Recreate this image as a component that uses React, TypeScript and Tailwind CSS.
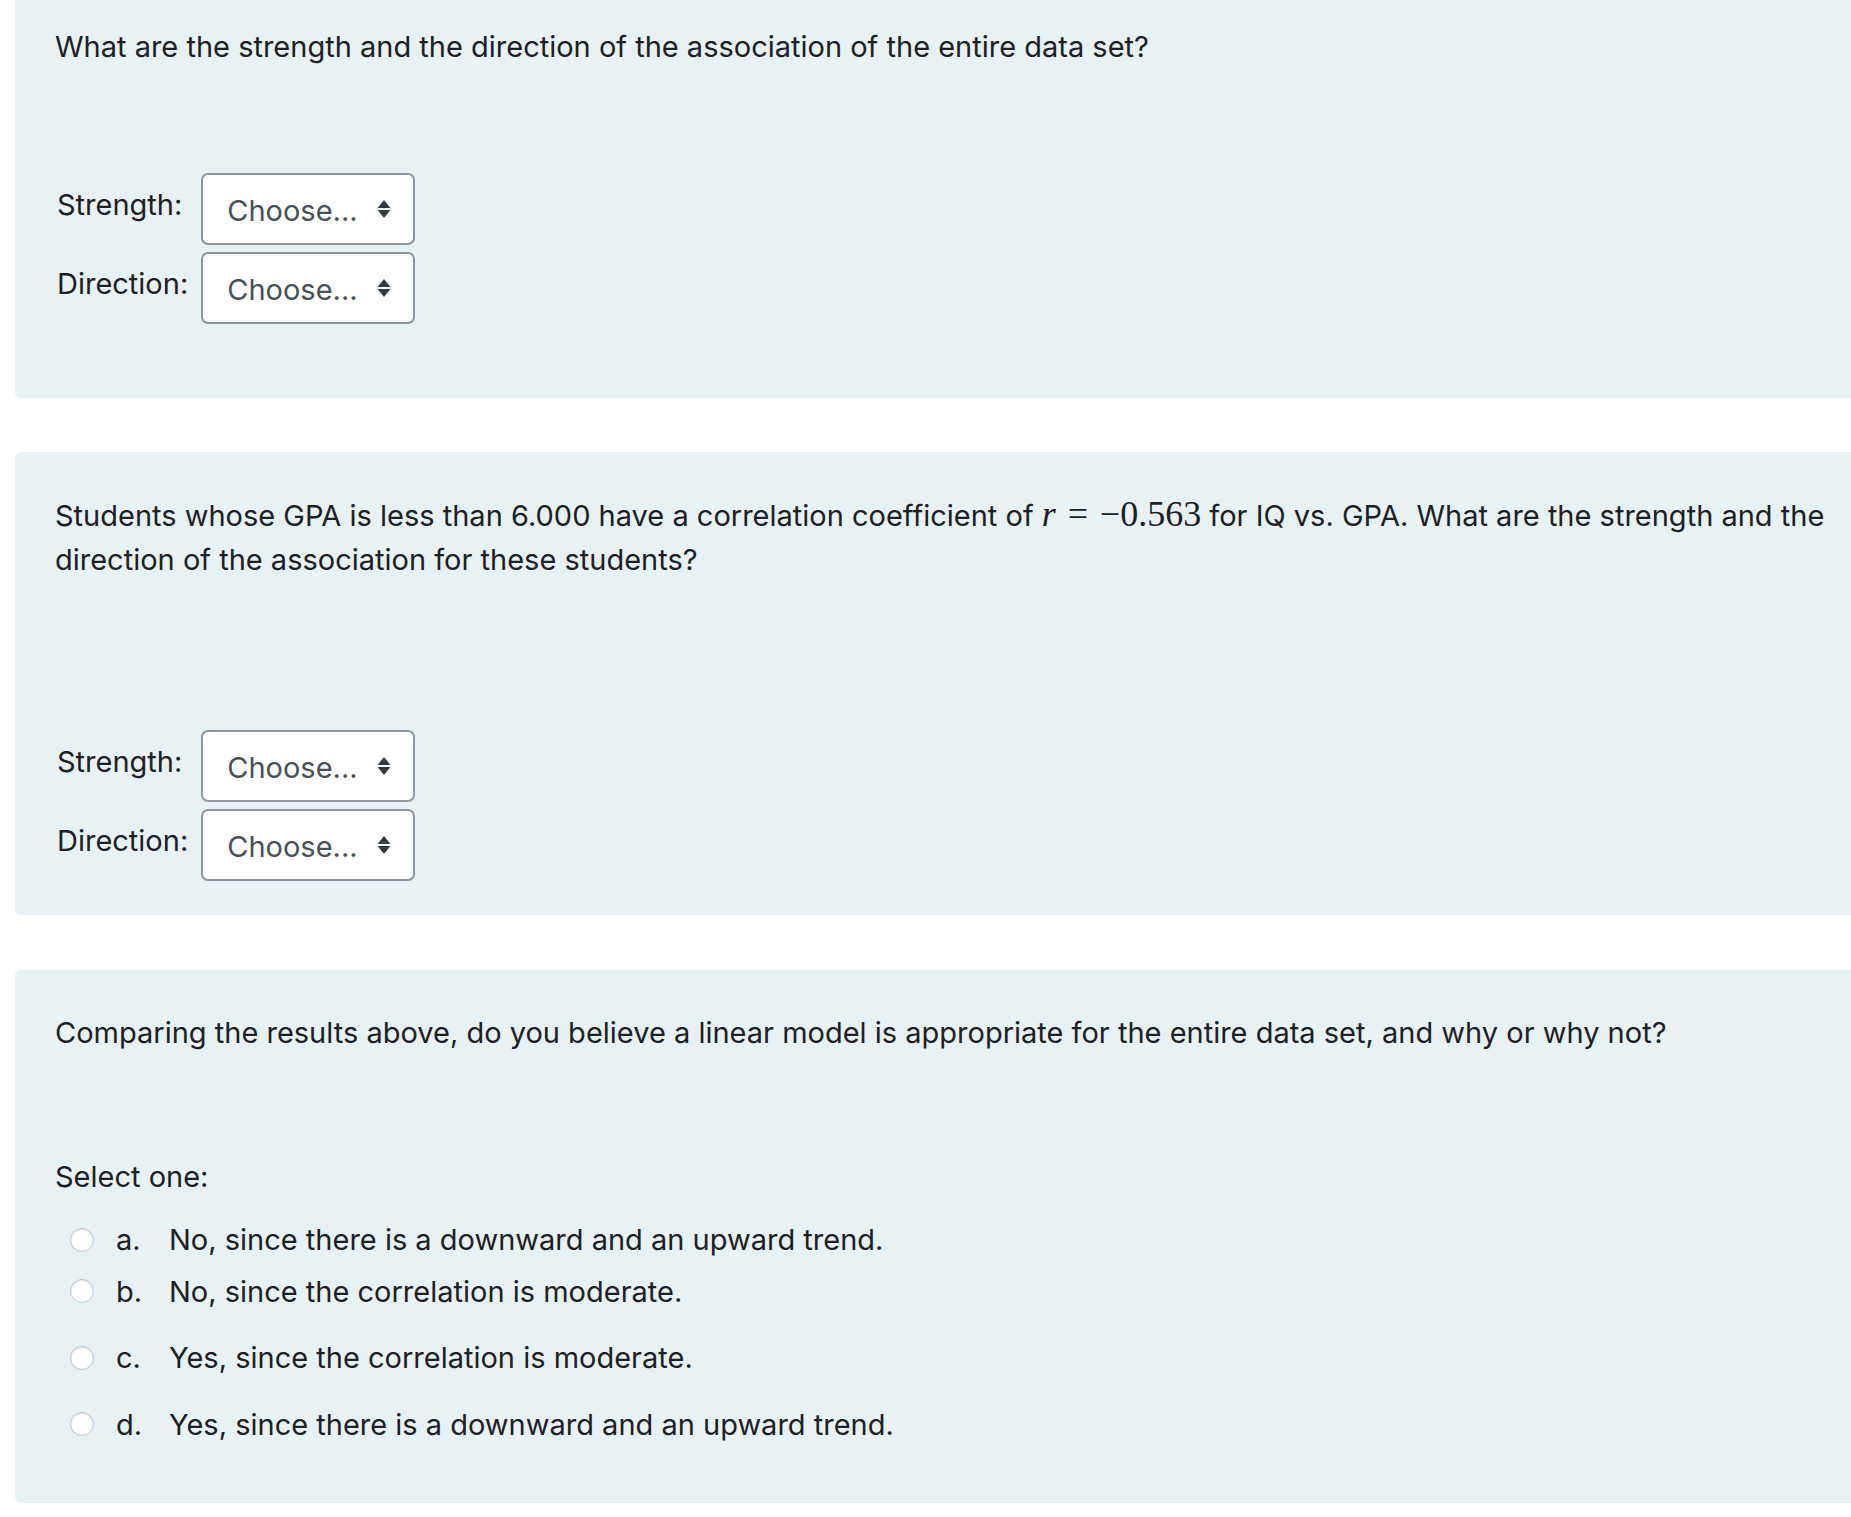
import React from "react";

const font = { fontFamily: "Inter, 'Liberation Sans', sans-serif" };
const mathFont = { fontFamily: "'Liberation Serif', 'Times New Roman', serif" };

function SelectBox() {
  return (
    <div className="flex h-[72px] w-[214px] items-center justify-between rounded-[7px] border-2 border-[#8f959e] bg-white pl-[24px] pr-[22px] pt-[4px] text-[#495057]">
      <span>Choose...</span>
      <svg width="14" height="20" viewBox="0 0 14 20" className="mb-[4px] shrink-0">
        <path d="M7 1 L13.5 9 L0.5 9 Z" fill="#343a40" />
        <path d="M0.5 11 L13.5 11 L7 19 Z" fill="#343a40" />
      </svg>
    </div>
  );
}

function Dropdowns() {
  return (
    <div className="grid grid-cols-[auto_auto] justify-start gap-x-[13px] gap-y-[7px]">
      <span className="pl-[2px] pt-[10px]">Strength:</span>
      <SelectBox />
      <span className="pl-[2px] pt-[10px]">Direction:</span>
      <SelectBox />
    </div>
  );
}

function Radio() {
  return (
    <span className="block h-[24px] w-[24px] shrink-0 rounded-full border border-[#bfc4ca] bg-white shadow-[inset_0_1px_2px_rgba(0,0,0,0.12)]" />
  );
}

const options = [
  { letter: "a.", text: "No, since there is a downward and an upward trend.", mt: "mt-[20px]" },
  { letter: "b.", text: "No, since the correlation is moderate.", mt: "mt-[8px]" },
  { letter: "c.", text: "Yes, since the correlation is moderate.", mt: "mt-[23px]" },
  { letter: "d.", text: "Yes, since there is a downward and an upward trend.", mt: "mt-[23px]" },
];

export default function App() {
  return (
    <div
      className="min-h-screen w-[1851px] overflow-hidden bg-white pb-[14px] text-[29px] leading-[43.5px] text-[#1d2125]"
      style={font}
    >
      {/* vraag 1 */}
      <div className="ml-[15px] h-[398px] rounded-bl-[6px] bg-[#e8f1f4] pl-[40px] pt-[25px]">
        <p>What are the strength and the direction of the association of the entire data set?</p>
        <div className="mt-[104px]">
          <Dropdowns />
        </div>
      </div>

      {/* vraag 2 */}
      <div className="ml-[15px] mt-[54px] h-[463px] rounded-l-[6px] bg-[#e8f1f4] pl-[40px] pt-[41px]">
        <p className="whitespace-nowrap">
          Students whose GPA is less than 6.000 have a correlation coefficient of{" "}
          <span className="text-[36px]" style={mathFont}>
            <i>r</i>
            <span className="mx-[0.33em]">=</span>−0.563
          </span>{" "}
          for IQ vs. GPA. What are the strength and the
          <br />
          direction of the association for these students?
        </p>
        <div className="mt-[149px]">
          <Dropdowns />
        </div>
      </div>

      {/* vraag 3 */}
      <div className="ml-[15px] mt-[55px] h-[533px] rounded-l-[6px] bg-[#e8f1f4] pl-[40px] pt-[41px]">
        <p>
          Comparing the results above, do you believe a linear model is appropriate for the entire data set, and why or
          why not?
        </p>
        <p className="mt-[100px]">Select one:</p>
        <div>
          {options.map((o) => (
            <div key={o.letter} className={`flex items-center ${o.mt}`}>
              <span className="ml-[15px]">
                <Radio />
              </span>
              <span className="ml-[22px] w-[53px]">{o.letter}</span>
              <span>{o.text}</span>
            </div>
          ))}
        </div>
      </div>
    </div>
  );
}
